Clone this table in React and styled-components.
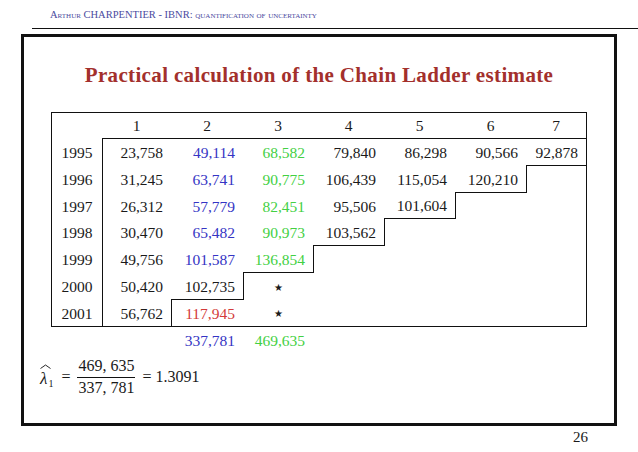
import React from 'react';
import styled, { createGlobalStyle } from 'styled-components';

const GlobalStyle = createGlobalStyle`
    html, body {
        margin: 0;
        padding: 0;
        background: #ffffff;
    }
    body {
        font-family: "Liberation Serif", "Times New Roman", serif;
        color: #1a1a1a;
    }
`;

const BLUE = '#3434c4';
const GREEN = '#43d043';
const RED = '#d33a3a';

// development triangle: rows 1995..2001, columns 1..7
const rows = [
    { year: 1995, cells: ['23,758', '49,114', '68,582', '79,840', '86,298', '90,566', '92,878'] },
    { year: 1996, cells: ['31,245', '63,741', '90,775', '106,439', '115,054', '120,210'] },
    { year: 1997, cells: ['26,312', '57,779', '82,451', '95,506', '101,604'] },
    { year: 1998, cells: ['30,470', '65,482', '90,973', '103,562'] },
    { year: 1999, cells: ['49,756', '101,587', '136,854'] },
    { year: 2000, cells: ['50,420', '102,735', '*'] },
    { year: 2001, cells: ['56,762', '117,945', '*'] },
];

const known = [7, 6, 5, 4, 3, 2, 1];

const colorFor = (r, c) => {
    if (r === 6 && c === 2) return RED;
    if (c === 2 && r <= 4) return BLUE;
    if (c === 3 && r <= 4) return GREEN;
    return null;
};

const COLS = '50px 69px 72px 70px 71px 71px 71px 60px';
const ROWS = '26px 27px 27px 26px 27px 27px 27px 26px';

const Page = styled.div`
    width: 638px;
    height: 452px;
    overflow: hidden;
`;

const Header = styled.div`
    margin-left: 32px;
    height: 28px;
    border-bottom: 1px solid #111;
    padding-left: 18px;
    display: flex;
    align-items: center;
    font-variant: small-caps;
    font-size: 10.5px;
    color: #4a4a9e;
`;

const Frame = styled.div`
    box-sizing: border-box;
    margin: 5px 0 0 21px;
    width: 596px;
    height: 392px;
    border: 3px solid #111;
`;

const Title = styled.h1`
    margin: 26px 0 0 0;
    text-align: center;
    font-size: 21px;
    line-height: 24px;
    letter-spacing: 0.35px;
    font-weight: bold;
    color: #a3302c;
`;

const Table = styled.div`
    margin: 25px 0 0 27px;
    width: 536px;
    box-sizing: border-box;
    border: 1px solid #111;
    display: grid;
    grid-template-columns: ${COLS};
    grid-template-rows: ${ROWS};
    font-size: 15.5px;
`;

const Cell = styled.div`
    box-sizing: border-box;
    display: flex;
    align-items: center;
    justify-content: ${p => (p.$align === 'right' ? 'flex-end' : 'center')};
    padding-right: ${p => (p.$align === 'right' ? '8px' : '0')};
    padding-top: 1px;
    color: ${p => p.$color || '#1a1a1a'};
    border-left: ${p => (p.$left ? '1px solid #111' : 'none')};
    border-bottom: ${p => (p.$bottom ? '1px solid #111' : 'none')};
`;

const Star = styled.span`
    font-size: 10px;
`;

const Totals = styled.div`
    margin-left: 28px;
    width: 534px;
    height: 27px;
    display: grid;
    grid-template-columns: ${COLS};
    font-size: 15.5px;
`;

const Formula = styled.div`
    margin: 2px 0 0 16px;
    display: flex;
    align-items: center;
    gap: 6px;
    font-size: 16px;
    height: 42px;
`;

const Lambda = styled.span`
    position: relative;
    font-style: italic;
    font-size: 17px;
    padding-top: 3px;
    margin-right: 2px;
`;

const Hat = styled.svg`
    position: absolute;
    left: 0;
    top: -2px;
`;

const Sub = styled.sub`
    font-size: 10px;
    font-style: normal;
    vertical-align: -3px;
    margin-left: 1px;
`;

const Fraction = styled.span`
    display: inline-flex;
    flex-direction: column;
    align-items: center;
    margin: 0 1px;
`;

const Numer = styled.span`
    padding: 0 1px 2px;
    border-bottom: 1px solid #111;
`;

const Denom = styled.span`
    padding: 1px 1px 0;
`;

const PageNum = styled.div`
    width: 588px;
    text-align: right;
    margin-top: 2px;
    font-size: 15px;
    line-height: 18px;
`;

const App = () => {
    const headCells = [];
    headCells.push(<Cell key="h0" />);
    for (let c = 1; c <= 7; c++) {
        headCells.push(<Cell key={`h${c}`} $bottom>{c}</Cell>);
    }

    const body = [];
    rows.forEach((row, r) => {
        body.push(<Cell key={`y${r}`}>{row.year}</Cell>);
        for (let c = 1; c <= 7; c++) {
            const isKnown = c <= known[r];
            const value = row.cells[c - 1];
            const belowKnown = r < 6 && c <= known[r + 1];
            const firstEmpty = c === known[r] + 1;
            body.push(
                <Cell
                    key={`c${r}-${c}`}
                    $align={value === '*' ? 'center' : 'right'}
                    $color={colorFor(r, c)}
                    $left={c === 1 || firstEmpty}
                    $bottom={isKnown && r < 6 && !belowKnown}
                >
                    {value === '*' ? <Star>★</Star> : value}
                </Cell>
            );
        }
    });

    return (
        <Page>
            <GlobalStyle />
            <Header>Arthur CHARPENTIER - IBNR: quantification of uncertainty</Header>
            <Frame>
                <Title>Practical calculation of the Chain Ladder estimate</Title>
                <Table>
                    {headCells}
                    {body}
                </Table>
                <Totals>
                    <Cell />
                    <Cell />
                    <Cell $align="right" $color={BLUE}>337,781</Cell>
                    <Cell $align="right" $color={GREEN}>469,635</Cell>
                </Totals>
                <Formula>
                    <Lambda>
                        <Hat width="11" height="5" viewBox="0 0 11 5">
                            <polyline points="0.5,4.5 5.5,1 10.5,4.5" fill="none" stroke="#111" strokeWidth="0.9" />
                        </Hat>
                        λ<Sub>1</Sub>
                    </Lambda>
                    <span>=</span>
                    <Fraction>
                        <Numer>469, 635</Numer>
                        <Denom>337, 781</Denom>
                    </Fraction>
                    <span>= 1.3091</span>
                </Formula>
            </Frame>
            <PageNum>26</PageNum>
        </Page>
    );
};

export default App;
